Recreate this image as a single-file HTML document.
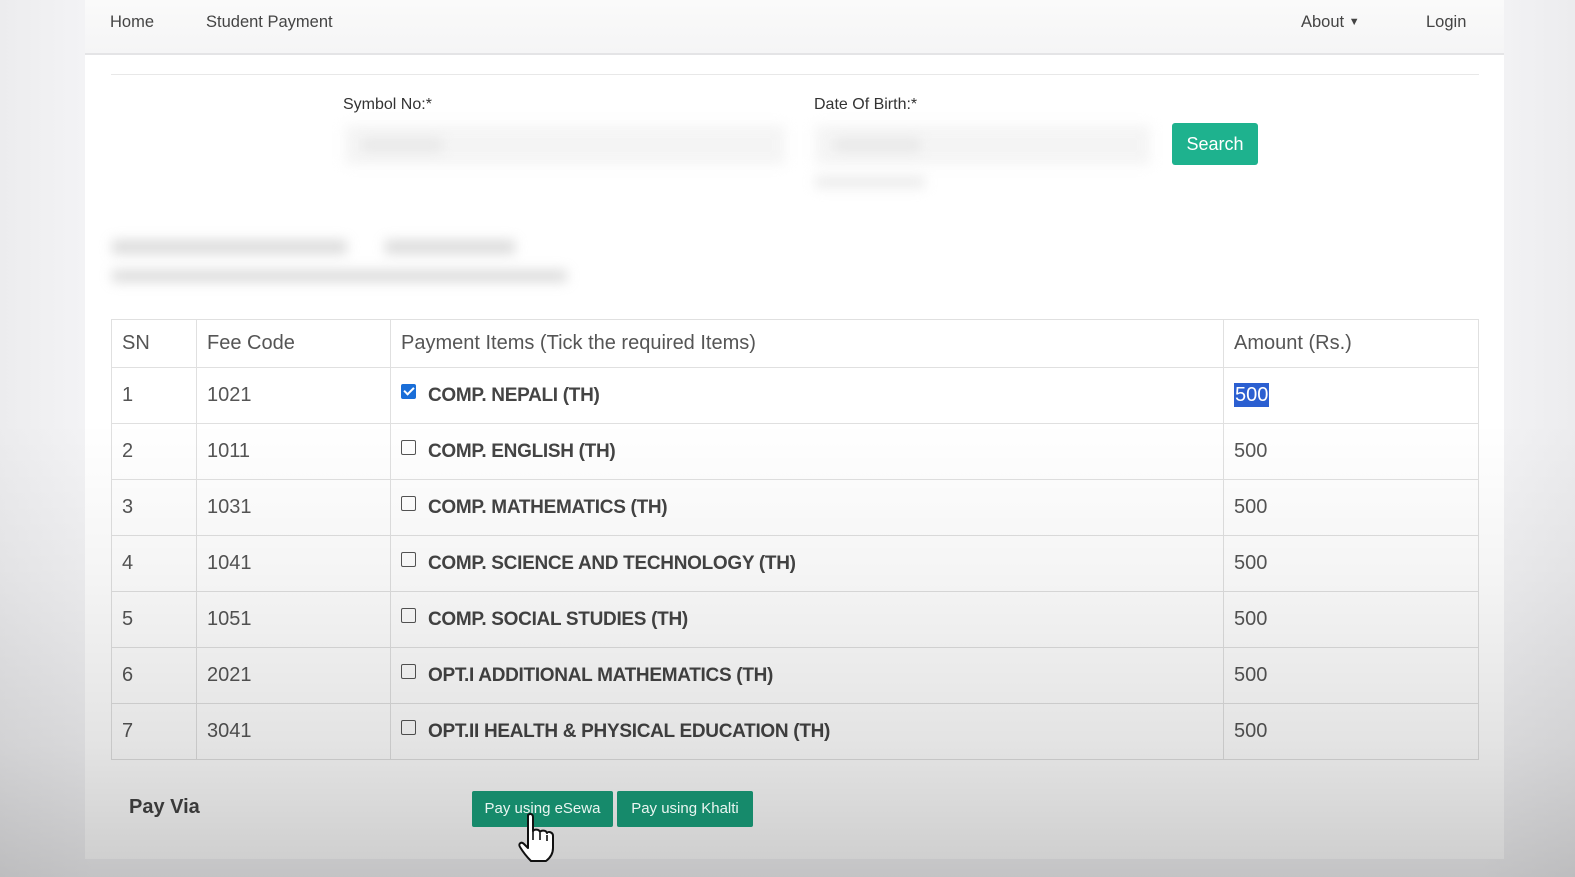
<!DOCTYPE html>
<html><head><meta charset="utf-8"><style>
*{box-sizing:border-box;margin:0;padding:0}
body{width:1575px;height:877px;overflow:hidden;background:linear-gradient(90deg,#ececee 0,#f4f4f6 6%,#f4f4f6 94%,#ececee 100%);font-family:"Liberation Sans",sans-serif;color:#333;position:relative}
.panel{position:absolute;left:85px;top:0;width:1419px;height:859px;background:#fff}
.nav{position:absolute;left:85px;top:0;width:1419px;height:55px;background:linear-gradient(#fafafa,#f5f5f6);border-bottom:2px solid #e4e4e6}
.nav span{position:absolute;top:13px;font-size:16.5px;color:#444}
.hr{position:absolute;left:111px;top:74px;width:1368px;height:1px;background:#e8e8e8}
.lbl{position:absolute;top:96px;font-size:16px;color:#333}
.blur{position:absolute;background:#e4e4e4;filter:blur(6px);opacity:.7}
.search{position:absolute;left:1172px;top:123px;width:86px;height:42px;background:#1eb28e;border-radius:3px;color:#fff;font-size:18px;text-align:center;line-height:42px}
table{position:absolute;left:111px;top:319px;width:1368px;border-collapse:collapse;font-size:20px;color:#555}
td{border:1px solid #e0e0e0;height:56px;padding:0 10px;vertical-align:middle}
tr.h td{height:48px;color:#555}
td.it{font-weight:bold;color:#444;font-size:19px;letter-spacing:-0.3px}
.cb{display:inline-block;width:15px;height:15px;border:1.5px solid #555;border-radius:2px;margin-right:12px;vertical-align:2px}
.cb.on{background:#1a6ed8;border-color:#1a6ed8;position:relative}
.cb.on:after{content:"";position:absolute;left:3.5px;top:0px;width:4px;height:8px;border:solid #fff;border-width:0 2px 2px 0;transform:rotate(45deg)}
.sel{background:#2b5fd1;color:#fff;padding:1px 1px}
.vig{position:absolute;left:0;top:0;width:1575px;height:877px;background:linear-gradient(rgba(0,0,0,0) 0,rgba(0,0,0,0) 48%,rgba(0,0,0,.04) 65%,rgba(0,0,0,.11) 85%,rgba(0,0,0,.2) 100%);pointer-events:none}
.btn{position:absolute;top:791px;height:36px;background:#168a6b;color:#e9f5f1;font-size:15px;line-height:36px;text-align:center;border-radius:2px}
</style></head><body>
<div class="panel"></div>
<div class="nav">
<span style="left:25px">Home</span><span style="left:121px">Student Payment</span>
<span style="left:1216px">About <span style="position:static;font-size:11px;vertical-align:2px">▼</span></span>
<span style="left:1341px">Login</span>
</div>
<div class="hr"></div>
<div class="lbl" style="left:343px">Symbol No:*</div>
<div class="lbl" style="left:814px">Date Of Birth:*</div>
<div class="blur" style="left:345px;top:125px;width:440px;height:40px;background:#f0f0f0"></div>
<div class="blur" style="left:362px;top:138px;width:80px;height:14px"></div>
<div class="blur" style="left:815px;top:125px;width:335px;height:40px;background:#f0f0f0"></div>
<div class="blur" style="left:835px;top:138px;width:85px;height:14px"></div>
<div class="blur" style="left:815px;top:176px;width:110px;height:12px"></div>
<div class="search">Search</div>
<div class="blur" style="left:112px;top:240px;width:235px;height:14px;background:#ccc"></div>
<div class="blur" style="left:385px;top:240px;width:130px;height:14px;background:#ccc"></div>
<div class="blur" style="left:112px;top:270px;width:455px;height:12px;background:#ccc"></div>
<table>
<tr class="h"><td style="width:85px">SN</td><td style="width:194px">Fee Code</td><td style="width:833px">Payment Items (Tick the required Items)</td><td>Amount (Rs.)</td></tr>
<tr><td>1</td><td>1021</td><td class="it"><span class="cb on"></span>COMP. NEPALI (TH)</td><td><span class="sel">500</span></td></tr>
<tr><td>2</td><td>1011</td><td class="it"><span class="cb"></span>COMP. ENGLISH (TH)</td><td>500</td></tr>
<tr><td>3</td><td>1031</td><td class="it"><span class="cb"></span>COMP. MATHEMATICS (TH)</td><td>500</td></tr>
<tr><td>4</td><td>1041</td><td class="it"><span class="cb"></span>COMP. SCIENCE AND TECHNOLOGY (TH)</td><td>500</td></tr>
<tr><td>5</td><td>1051</td><td class="it"><span class="cb"></span>COMP. SOCIAL STUDIES (TH)</td><td>500</td></tr>
<tr><td>6</td><td>2021</td><td class="it"><span class="cb"></span>OPT.I ADDITIONAL MATHEMATICS (TH)</td><td>500</td></tr>
<tr><td>7</td><td>3041</td><td class="it"><span class="cb"></span>OPT.II HEALTH &amp; PHYSICAL EDUCATION (TH)</td><td>500</td></tr>
</table>
<div style="position:absolute;left:129px;top:796px;font-size:20px;font-weight:bold;color:#444">Pay Via</div>
<div class="vig"></div>
<div class="btn" style="left:472px;width:141px">Pay using eSewa</div>
<div class="btn" style="left:617px;width:136px">Pay using Khalti</div>
<svg style="position:absolute;left:516px;top:812px" width="42" height="52" viewBox="0 0 42 52"><path d="M12 3c2-2 5-1 5 2v14c1-2 6-2 7 1 1-2 6-2 7 1 1-2 6-1 6 3v12c0 6-3 10-7 13H15c-3-3-8-9-11-14-2-3 1-6 4-3l4 4V5z" fill="#fff" stroke="#111" stroke-width="2" stroke-linejoin="round"/><path d="M17 19v9M24 21v7M31 23v6" stroke="#111" stroke-width="1.6"/></svg>
</body></html>
